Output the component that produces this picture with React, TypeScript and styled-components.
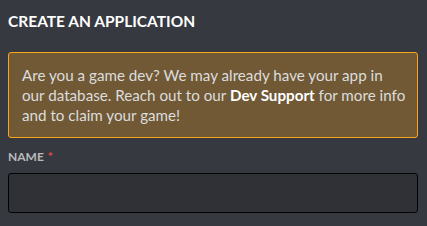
import styled, { createGlobalStyle } from "styled-components";

const GlobalStyle = createGlobalStyle`
  html, body {
    margin: 0;
    padding: 0;
    background-color: #36393f;
  }
  * {
    box-sizing: border-box;
  }
`;

const App = () => {
  return (
    <>
      <GlobalStyle />
      <Page>
        <Title>Create an application</Title>
        <Notice>
          Are you a game dev? We may already have your app in
          <br />
          our database. Reach out to our <strong>Dev Support</strong> for more
          info
          <br />
          and to claim your game!
        </Notice>
        <Field>
          <Label>
            Name<Required>*</Required>
          </Label>
          <Input type="text" />
        </Field>
      </Page>
    </>
  );
};

const Page = styled.div`
  width: 427px;
  height: 226px;
  padding: 11px 9px 0 8px;
  display: flex;
  flex-direction: column;
  font-family: Lato, "Noto Sans", sans-serif;
`;

const Title = styled.h2`
  margin: 0;
  color: #ffffff;
  font-size: 15.5px;
  line-height: 20px;
  font-weight: 700;
  text-transform: uppercase;
`;

const Notice = styled.div`
  margin-top: 21px;
  padding: 12px 4px 12px 13px;
  border: 1px solid #faa61a;
  border-radius: 3px;
  background-color: rgba(250, 166, 26, 0.3);
  color: #dcddde;
  font-size: 15.2px;
  line-height: 20px;
  white-space: nowrap;

  strong {
    color: #ffffff;
    font-weight: 700;
  }
`;

const Field = styled.div`
  margin-top: 11px;
  display: flex;
  flex-direction: column;
  gap: 8px;
`;

const Label = styled.label`
  color: #b9bbbe;
  font-size: 12px;
  line-height: 16px;
  font-weight: 700;
  text-transform: uppercase;
`;

const Required = styled.span`
  color: #f04747;
  margin-left: 4px;
`;

const Input = styled.input`
  width: 100%;
  height: 40px;
  padding: 0 10px;
  border: 1px solid #040405;
  border-radius: 3px;
  background-color: #303136;
  color: #dcddde;
  font-size: 16px;
  outline: none;
`;

export default App;
